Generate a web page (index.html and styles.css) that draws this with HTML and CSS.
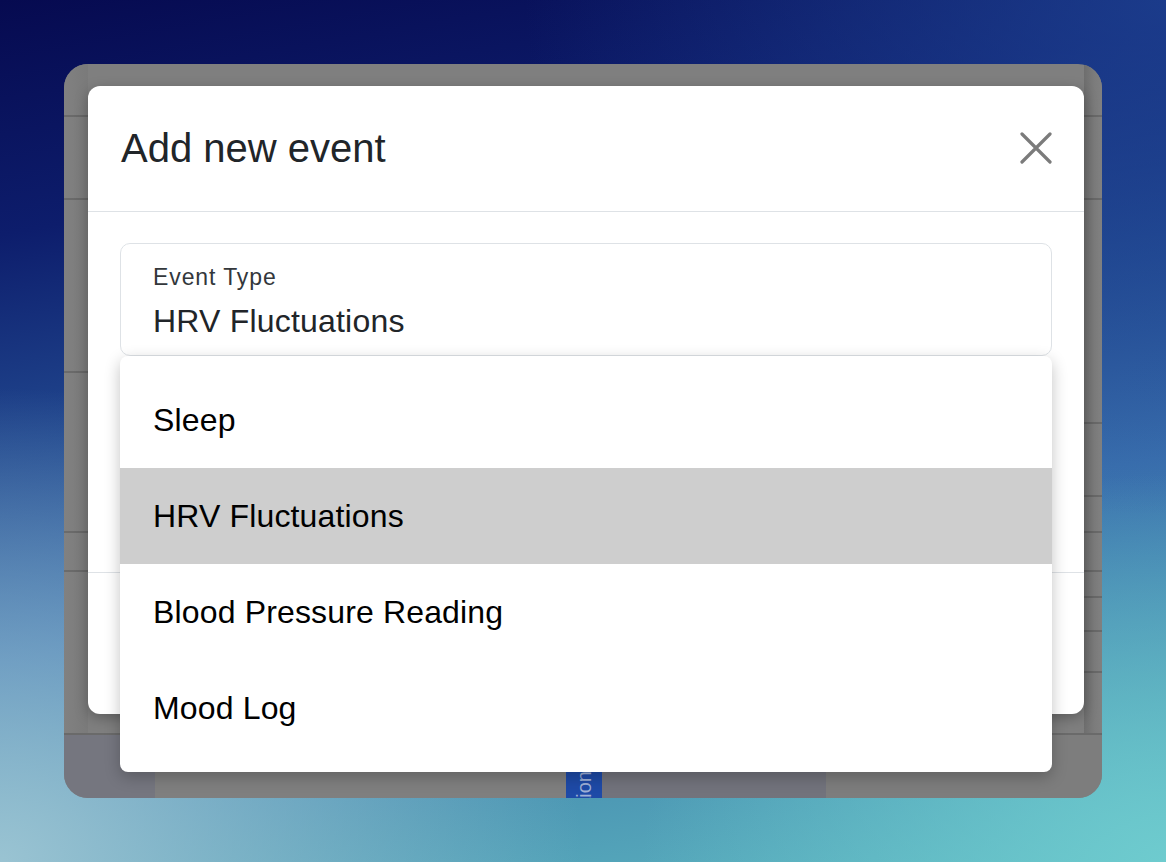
FILE: index.html
```html
<!DOCTYPE html>
<html lang="en">
<head>
<meta charset="utf-8">
<title>Add new event</title>
<link rel="stylesheet" href="styles.css">
</head>
<body>
<div class="stage">
  <div class="window">
    <div class="app">
      <div class="app-main">
        <div class="rail rail-left">
          <div class="row" style="height:53px"></div>
          <div class="row" style="height:83px"></div>
          <div class="row" style="height:173px"></div>
          <div class="row" style="height:160px"></div>
          <div class="row" style="height:39px"></div>
          <div class="row row-last"></div>
        </div>
        <div class="app-center"></div>
        <div class="rail rail-right">
          <div class="row" style="height:53px"></div>
          <div class="row" style="height:83px"></div>
          <div class="row" style="height:224px"></div>
          <div class="row" style="height:73px"></div>
          <div class="row" style="height:36px"></div>
          <div class="row" style="height:39px"></div>
          <div class="row" style="height:26px"></div>
          <div class="row" style="height:34px"></div>
          <div class="row" style="height:41px"></div>
          <div class="row row-last"></div>
        </div>
      </div>
      <div class="tabbar">
        <div class="tab tab-a"></div>
        <div class="tab tab-b"></div>
        <div class="tab tab-active"><span class="tab-label">Description</span></div>
        <div class="tab tab-c"></div>
        <div class="tab tab-d"></div>
      </div>
    </div>

    <div class="modal">
      <div class="modal-header">
        <h5 class="modal-title">Add new event</h5>
        <button class="close-btn" aria-label="Close">
          <svg width="32" height="32" viewBox="0 0 32 32">
            <path d="M2 2 L30 30 M30 2 L2 30" stroke="#7b7b7b" stroke-width="3.2" stroke-linecap="round" fill="none"/>
          </svg>
        </button>
      </div>
      <div class="modal-body">
        <div class="field">
          <div class="field-label">Event Type</div>
          <div class="field-value">HRV Fluctuations</div>
          <ul class="dropdown">
            <li class="option">Sleep</li>
            <li class="option selected">HRV Fluctuations</li>
            <li class="option">Blood Pressure Reading</li>
            <li class="option">Mood Log</li>
          </ul>
        </div>
      </div>
      <div class="modal-footer"></div>
    </div>
  </div>
</div>
</body>
</html>
```

FILE: styles.css
```css
* { box-sizing: border-box; }

html, body {
  margin: 0;
  padding: 0;
  width: 1166px;
  height: 862px;
  overflow: hidden;
}

body {
  font-family: "Liberation Sans", Arial, sans-serif;
  background:
    radial-gradient(ellipse 50% 55% at 0% 100%, rgba(158, 198, 212, 0.95), rgba(158, 198, 212, 0) 100%),
    radial-gradient(ellipse 45% 45% at 100% 100%, rgba(112, 206, 208, 0.9), rgba(112, 206, 208, 0) 100%),
    radial-gradient(ellipse 55% 60% at 100% 0%, rgba(32, 70, 150, 0.75), rgba(32, 70, 150, 0) 100%),
    linear-gradient(170deg, #060a50 0%, #0d1d6c 22%, #21488f 42%, #3a70ae 62%, #4d98b4 84%, #5cb4c0 100%);
}

.stage {
  padding: 64px;
}

.window {
  position: relative;
  width: 1038px;
  height: 734px;
  border-radius: 24px;
  background: #7f7f7f;
  overflow: hidden;
}

.app {
  display: flex;
  flex-direction: column;
  height: 100%;
}

.app-main {
  display: flex;
  height: 669px;
}

.rail {
  display: flex;
  flex-direction: column;
}

.rail-left { width: 24px; background: linear-gradient(90deg, #818181, #7a7a7a); }
.rail-right { width: 18px; background: linear-gradient(90deg, #6e6e6e, #7c7c7c 60%, #808080); }

.app-center { flex: 1; }

.row {
  flex: none;
  border-bottom: 2px solid rgba(0, 0, 0, 0.16);
}

.row-last {
  flex: 1;
  border-bottom: none;
}

.tabbar {
  display: flex;
  height: 65px;
  border-top: 2px solid rgba(0, 0, 0, 0.16);
}

.tab { height: 100%; }
.tab-a { width: 91px; background: #75767f; }
.tab-b { width: 411px; background: #7f7f7f; }
.tab-active {
  width: 36px;
  background: #1e4aa7;
  display: flex;
  justify-content: center;
  align-items: flex-start;
  padding-top: 36px;
  overflow: hidden;
}
.tab-c { width: 224px; background: #72737c; }
.tab-d { flex: 1; background: #7d7d7d; }

.tab-label {
  writing-mode: vertical-rl;
  transform: rotate(180deg);
  font-size: 20px;
  color: #9fb0d6;
  white-space: nowrap;
}

.modal {
  position: absolute;
  left: 24px;
  top: 22px;
  width: 996px;
  height: 628px;
  background: #ffffff;
  border-radius: 12px;
  box-shadow: 0 4px 14px rgba(0, 0, 0, 0.28);
  display: flex;
  flex-direction: column;
}

.modal-header {
  height: 126px;
  flex: none;
  display: flex;
  align-items: center;
  justify-content: space-between;
  padding: 0 32px 1px 33px;
  border-bottom: 1px solid #dee2e6;
}

.modal-title {
  margin: 0;
  font-size: 40px;
  font-weight: 400;
  color: #212529;
  line-height: 48px;
}

.close-btn {
  border: 0;
  background: transparent;
  padding: 0;
  width: 32px;
  height: 32px;
  display: block;
}

.close-btn svg { display: block; }

.modal-body {
  height: 360px;
  flex: none;
  padding: 31px 32px 0;
}

.modal-footer {
  flex: 1;
  border-top: 1px solid #dee2e6;
}

.field {
  position: relative;
  height: 113px;
  border: 1px solid #dee2e6;
  border-radius: 10px;
  padding: 19px 32px 0;
}

.field-label {
  font-size: 23px;
  line-height: 28px;
  letter-spacing: 0.9px;
  color: #33373b;
}

.field-value {
  margin-top: 10px;
  font-size: 32px;
  line-height: 40px;
  letter-spacing: 0.2px;
  color: #212529;
}

.dropdown {
  position: absolute;
  top: 112px;
  left: -1px;
  width: calc(100% + 2px);
  margin: 0;
  padding: 16px 0;
  list-style: none;
  background: #ffffff;
  border-radius: 8px;
  box-shadow: 0 5px 16px rgba(0, 0, 0, 0.24);
  z-index: 2;
}

.option {
  height: 96px;
  line-height: 96px;
  padding-left: 33px;
  font-size: 32px;
  letter-spacing: 0.15px;
  color: #000000;
}

.option.selected {
  background: #cecece;
}
```
